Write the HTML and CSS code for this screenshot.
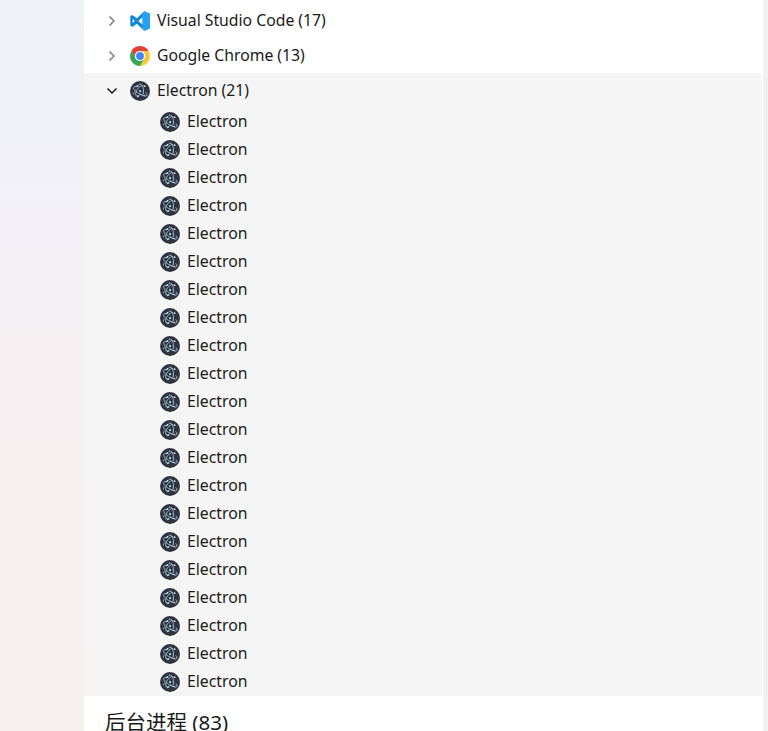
FILE: index.html
```html
<!doctype html>
<html lang="zh-CN">
<head>
    <meta charset="UTF-8">
    <title>Task Manager</title>
    <link rel="stylesheet" href="styles.css">
</head>
<body>
<svg class="defs" width="0" height="0">
    <symbol id="electron" viewBox="0 0 20 20">
        <circle cx="10" cy="10" r="10" fill="#2b3440"/>
        <g fill="none" stroke="#a6c3cf" stroke-width="0.95">
            <path d="M7.200 5.800C5.400 5.300 4.200 5.500 3.800 6.400c-.7 1.400 1.500 4 4.900 6 2.600 1.500 5.100 2.200 6.500 1.800"/>
            <path d="M15.800 11.500c1.300 1.300 1.500 2.400.9 3.100-1 1.100-3.800.3-6.400-1.500"/>
            <path d="M13.300 4.700c-2-.6-5 1.600-6.600 4.700-1.200 2.400-1.400 4.600-.5 5.400 1 .8 2.700.1 4.200-1.500"/>
            <path d="M8.200 4.600C8.800 3.500 9.500 3 10.200 3c1.900 0 3.300 3.200 3.300 7 0 1.100-.1 2.100-.3 3"/>
            <path d="M4.700 10.800C3.400 11.700 3 12.700 3.400 13.500"/>
        </g>
        <g fill="#c3dde8">
            <circle cx="10.200" cy="10.100" r="1.100"/>
            <circle cx="7.400" cy="5" r="0.900"/>
            <circle cx="14.700" cy="5.200" r="0.900"/>
            <circle cx="8" cy="15.300" r="0.900"/>
        </g>
    </symbol>
</svg>

<div class="window">
    <div class="sidebar"></div>
    <div class="panel">
        <div class="row">
            <svg class="arrow" width="12" height="12" viewBox="0 0 12 12"><path d="M3.500 1.500 8 6l-4.500 4.500" fill="none" stroke="#7d7d7d" stroke-width="1.500"/></svg>
            <svg class="icon" width="20" height="20" viewBox="0 0 20 20">
                <path d="M14.300 0.300 6.800 7.300 2.400 4 0.300 5.200V14.800L2.400 16l4.400-3.300 7.500 7L20 17.200V2.800z" fill="#1487d4"/>
                <path d="M14.300 0.300 20 2.800v14.400l-5.700 2.500-2.200-2V2.300z" fill="#25a3f0"/>
                <path d="M12.300 6.400 8.300 10l4 3.600z" fill="#fff"/>
                <path d="M2.600 8 4.700 10l-2.100 2z" fill="#fff"/>
            </svg>
            <span class="label">Visual Studio Code (17)</span>
        </div>
        <div class="row">
            <svg class="arrow" width="12" height="12" viewBox="0 0 12 12"><path d="M3.500 1.500 8 6l-4.500 4.500" fill="none" stroke="#7d7d7d" stroke-width="1.500"/></svg>
            <svg class="icon" width="20" height="20" viewBox="0 0 20 20">
                <path d="M1.340 5A10 10 0 0 1 18.660 5H10A5 5 0 0 0 5.670 12.500z" fill="#db4437"/>
                <path d="M18.660 5A10 10 0 0 1 10 20L14.330 12.500A5 5 0 0 0 10 5z" fill="#fcc934"/>
                <path d="M10 20A10 10 0 0 1 1.340 5L5.670 12.500A5 5 0 0 0 14.330 12.500z" fill="#34a853"/>
                <circle cx="10" cy="10" r="5" fill="#fff"/>
                <circle cx="10" cy="10" r="3.900" fill="#4285f4"/>
            </svg>
            <span class="label">Google Chrome (13)</span>
        </div>
        <div class="group">
            <div class="row">
                <svg class="arrow" width="12" height="12" viewBox="0 0 12 12"><path d="M1.500 3.500 6 8l4.500-4.500" fill="none" stroke="#1a1a1a" stroke-width="1.500"/></svg>
                <svg class="icon" width="20" height="20"><use href="#electron"/></svg>
                <span class="label">Electron (21)</span>
            </div>
            <div class="child"><svg class="icon" width="20" height="20"><use href="#electron"/></svg><span class="label">Electron</span></div>
            <div class="child"><svg class="icon" width="20" height="20"><use href="#electron"/></svg><span class="label">Electron</span></div>
            <div class="child"><svg class="icon" width="20" height="20"><use href="#electron"/></svg><span class="label">Electron</span></div>
            <div class="child"><svg class="icon" width="20" height="20"><use href="#electron"/></svg><span class="label">Electron</span></div>
            <div class="child"><svg class="icon" width="20" height="20"><use href="#electron"/></svg><span class="label">Electron</span></div>
            <div class="child"><svg class="icon" width="20" height="20"><use href="#electron"/></svg><span class="label">Electron</span></div>
            <div class="child"><svg class="icon" width="20" height="20"><use href="#electron"/></svg><span class="label">Electron</span></div>
            <div class="child"><svg class="icon" width="20" height="20"><use href="#electron"/></svg><span class="label">Electron</span></div>
            <div class="child"><svg class="icon" width="20" height="20"><use href="#electron"/></svg><span class="label">Electron</span></div>
            <div class="child"><svg class="icon" width="20" height="20"><use href="#electron"/></svg><span class="label">Electron</span></div>
            <div class="child"><svg class="icon" width="20" height="20"><use href="#electron"/></svg><span class="label">Electron</span></div>
            <div class="child"><svg class="icon" width="20" height="20"><use href="#electron"/></svg><span class="label">Electron</span></div>
            <div class="child"><svg class="icon" width="20" height="20"><use href="#electron"/></svg><span class="label">Electron</span></div>
            <div class="child"><svg class="icon" width="20" height="20"><use href="#electron"/></svg><span class="label">Electron</span></div>
            <div class="child"><svg class="icon" width="20" height="20"><use href="#electron"/></svg><span class="label">Electron</span></div>
            <div class="child"><svg class="icon" width="20" height="20"><use href="#electron"/></svg><span class="label">Electron</span></div>
            <div class="child"><svg class="icon" width="20" height="20"><use href="#electron"/></svg><span class="label">Electron</span></div>
            <div class="child"><svg class="icon" width="20" height="20"><use href="#electron"/></svg><span class="label">Electron</span></div>
            <div class="child"><svg class="icon" width="20" height="20"><use href="#electron"/></svg><span class="label">Electron</span></div>
            <div class="child"><svg class="icon" width="20" height="20"><use href="#electron"/></svg><span class="label">Electron</span></div>
            <div class="child"><svg class="icon" width="20" height="20"><use href="#electron"/></svg><span class="label">Electron</span></div>
        </div>
        <div class="section">后台进程 (83)</div>
    </div>
    <div class="scroll"></div>
</div>
</body>
</html>
```

FILE: styles.css
```css
html, body {
    margin: 0;
    padding: 0;
    height: 100%;
    overflow: hidden;
}

body {
    font-family: "Noto Sans", "Noto Sans CJK SC", sans-serif;
    font-size: 15.75px;
    color: #1a1a1a;
}

.defs {
    display: block;
    height: 0;
}

.window {
    display: flex;
    height: 731px;
    overflow: hidden;
}

.sidebar {
    width: 84px;
    flex: none;
    background: linear-gradient(180deg, #eef3f6 0%, #f3f1f6 30%, #f5f0f1 55%, #f5f0eb 100%);
}

.panel {
    width: 679px;
    flex: none;
    padding-top: 3px;
    background: #fff;
}

.scroll {
    flex: 1;
    background: #f0f0f0;
}

.row {
    display: flex;
    align-items: center;
    height: 35px;
    padding-left: 22px;
}

.arrow {
    flex: none;
    margin-right: 12px;
}

.icon {
    flex: none;
    margin-right: 7px;
}

.label {
    margin-top: -2px;
}

.group {
    background: #f5f5f5;
    margin-right: 1px;
}

.child {
    display: flex;
    align-items: center;
    height: 28px;
    padding-left: 76px;
}

.section {
    padding: 12px 0 0 21px;
    font-size: 20.5px;
    line-height: 28px;
}
```
